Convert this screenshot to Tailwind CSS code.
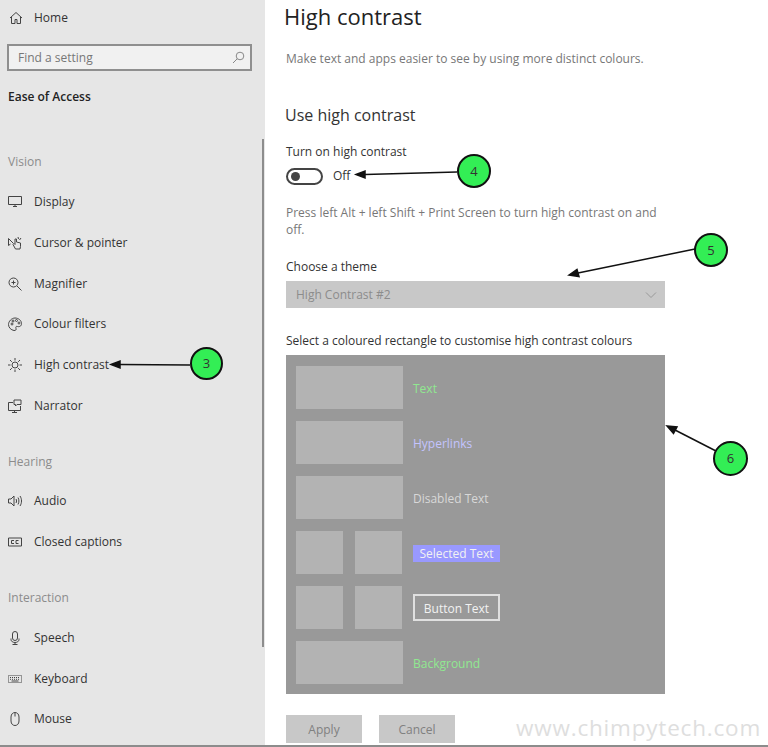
<!DOCTYPE html>
<html lang="en">
<head>
    <meta charset="UTF-8">
    <title>High contrast</title>
    <script src="https://cdn.jsdelivr.net/npm/@tailwindcss/browser@4"></script>
</head>
<body class="bg-white">
<div class="relative w-[768px] h-[747px] overflow-hidden flex font-['Open_Sans',sans-serif] text-[12px] text-[#333]">

    <!-- Sidebar -->
    <aside class="relative w-[265px] h-[745px] shrink-0 bg-[#e6e6e6]">
        <div class="h-[36px] flex items-center pl-[9px] gap-[11px]">
            <svg class="w-[14px] h-[14px]" viewBox="0 0 14 14" fill="none" stroke="#444" stroke-width="1"><path d="M1 7 7 1.500 13 7M2.500 6v6.500h3.500V8.500h2v4h3.500V6"/></svg>
            <span>Home</span>
        </div>
        <div class="mx-[7px] mt-[8px] h-[27px] w-[245px] border-2 border-[#8f8f8f] bg-[#f1f1f1] flex items-center justify-between pl-[9px] pr-[5px] text-[#777]">
            <span>Find a setting</span>
            <svg class="w-[13px] h-[13px]" viewBox="0 0 13 13" fill="none" stroke="#888" stroke-width="1"><circle cx="8" cy="5" r="3.800"/><path d="M5.200 7.800 1 12"/></svg>
        </div>
        <div class="mt-[16px] pl-[8px] font-semibold text-[#222] leading-[20px]">Ease of Access</div>

        <div class="mt-[45px] pl-[8px] h-[20px] leading-[20px] text-[#8c8c8c]">Vision</div>
        <div class="mt-[10px]">
            <div class="h-[40.700px] flex items-center pl-[8px] gap-[12px]">
                <svg class="w-[14px] h-[14px]" viewBox="0 0 14 14" fill="none" stroke="#444"><path d="M.5 1.500h13v8H.5zM5 11.500h4M7 9.500v2"/></svg>
                <span>Display</span>
            </div>
            <div class="h-[40.700px] flex items-center pl-[8px] gap-[12px]">
                <svg class="w-[14px] h-[14px]" viewBox="0 0 14 14" fill="none" stroke="#444"><path d="M.5 2.500v7l2-1.500M.5 2.500l5 5M7.500 13 5 8.500l1-1 1 1V3h1.500v3l4 1v3.500L12 13zM10 1l.5 2M13 2l-1.500 2"/></svg>
                <span>Cursor &amp; pointer</span>
            </div>
            <div class="h-[40.700px] flex items-center pl-[8px] gap-[12px]">
                <svg class="w-[14px] h-[14px]" viewBox="0 0 14 14" fill="none" stroke="#444"><circle cx="5.500" cy="5.500" r="4.500"/><path d="M3.500 5.500h4M5.500 3.500v4M9 9l4.500 4.500"/></svg>
                <span>Magnifier</span>
            </div>
            <div class="h-[40.700px] flex items-center pl-[8px] gap-[12px]">
                <svg class="w-[14px] h-[14px]" viewBox="0 0 14 14" fill="none" stroke="#444"><path d="M7 1c3.500 0 6.500 2.500 6.500 5.500S11 10 9.500 9.500 7.500 10 8 11.500 7.500 13.500 6 13.500C3 13 .5 10.500.5 7.500S3.500 1 7 1z"/><circle cx="4" cy="7" r="1"/><circle cx="5" cy="4" r="1"/><circle cx="8.500" cy="3.500" r="1"/><circle cx="11" cy="6" r="1"/></svg>
                <span>Colour filters</span>
            </div>
            <div class="h-[40.700px] flex items-center pl-[8px] gap-[12px]">
                <svg class="w-[14px] h-[14px]" viewBox="0 0 14 14" fill="none" stroke="#444"><circle cx="7" cy="7" r="3"/><path d="M7 0v2.500M7 11.500V14M0 7h2.500M11.500 7H14M2 2l1.800 1.800M10.200 10.200 12 12M12 2l-1.800 1.800M3.800 10.200 2 12"/></svg>
                <span>High contrast</span>
            </div>
            <div class="h-[40.700px] flex items-center pl-[8px] gap-[12px]">
                <svg class="w-[14px] h-[14px]" viewBox="0 0 14 14" fill="none" stroke="#444"><path d="M5 3.500H.5v8h12V7M4 13.500h5M6.500 11.500v2M6 1h7v4.500H9L7.500 7V5.500H6z"/></svg>
                <span>Narrator</span>
            </div>
        </div>

        <div class="mt-[26px] pl-[8px] h-[20px] leading-[20px] text-[#8c8c8c]">Hearing</div>
        <div class="mt-[9px]">
            <div class="h-[40.700px] flex items-center pl-[8px] gap-[12px]">
                <svg class="w-[14px] h-[14px]" viewBox="0 0 14 14" fill="none" stroke="#444"><path d="M.5 5v4h2.500L6 12V2L3 5zM8 5c.7 1.300.7 2.700 0 4M10 3.500c1.200 2.300 1.200 4.700 0 7M12 2c2 3 2 7 0 10"/></svg>
                <span>Audio</span>
            </div>
            <div class="h-[40.700px] flex items-center pl-[8px] gap-[12px]">
                <svg class="w-[14px] h-[14px]" viewBox="0 0 14 14" fill="none" stroke="#444"><path d="M.5 3h13v8H.5zM6 5.500H3.500v3H6M10.500 5.500H8v3h2.500"/></svg>
                <span>Closed captions</span>
            </div>
        </div>

        <div class="mt-[25px] pl-[8px] h-[20px] leading-[20px] text-[#8c8c8c]">Interaction</div>
        <div class="mt-[10px]">
            <div class="h-[40.700px] flex items-center pl-[8px] gap-[12px]">
                <svg class="w-[14px] h-[14px]" viewBox="0 0 14 14" fill="none" stroke="#444"><rect x="4.500" y=".5" width="5" height="9" rx="2.500"/><path d="M3 7.500v1c0 4 8 4 8 0v-1M7 12v2M4.500 13.500h5"/></svg>
                <span>Speech</span>
            </div>
            <div class="h-[40.700px] flex items-center pl-[8px] gap-[12px]">
                <svg class="w-[14px] h-[14px]" viewBox="0 0 14 14" fill="none" stroke="#444"><path d="M.5 3.500h13v7H.5zM2 5.500h10M2 7.300h10" stroke-dasharray="1 1"/><path d="M3.500 9h7"/></svg>
                <span>Keyboard</span>
            </div>
            <div class="h-[40.700px] flex items-center pl-[8px] gap-[12px]">
                <svg class="w-[14px] h-[14px]" viewBox="0 0 14 14" fill="none" stroke="#444"><path d="M3 5c0-6 8-6 8 0v4c0 6-8 6-8 0zM7 1v3.500"/></svg>
                <span>Mouse</span>
            </div>
        </div>

        <!-- scrollbar -->
        <div class="absolute left-[262px] top-[139px] w-[2px] h-[508px] bg-[#8d8d8d]"></div>
    </aside>

    <!-- Main content -->
    <main class="flex-1 pl-[21px] h-[745px]">
        <h1 class="h-[33px] leading-[33px] text-[22px] text-[#222] -ml-[2px]">High contrast</h1>
        <p class="mt-[16px] leading-[20px] text-[#777]">Make text and apps easier to see by using more distinct colours.</p>
        <h2 class="mt-[34px] leading-[24px] text-[16px] text-[#333] -ml-[1px]">Use high contrast</h2>
        <div class="mt-[16px] leading-[18px]">Turn on high contrast</div>
        <div class="mt-[5px] flex items-center gap-[10px] h-[20px]">
            <div class="w-[37px] h-[17px] rounded-full border-2 border-[#444] flex items-center pl-[3px]">
                <div class="w-[9px] h-[9px] rounded-full bg-[#444]"></div>
            </div>
            <span>Off</span>
        </div>
        <p class="mt-[18px] w-[380px] leading-[17px] text-[#777]">Press left Alt + left Shift + Print Screen to turn high contrast on and off.</p>
        <div class="mt-[20px] leading-[18px]">Choose a theme</div>
        <div class="mt-[5px] w-[379px] h-[27px] bg-[#c8c8c8] flex items-center justify-between pl-[10px] pr-[8px] text-[#8c8c8c]">
            <span>High Contrast #2</span>
            <svg class="w-[12px] h-[8px]" viewBox="0 0 12 8" fill="none" stroke="#999"><path d="M1 1.500 6 6.500 11 1.500"/></svg>
        </div>
        <div class="mt-[24px] leading-[18px]">Select a coloured rectangle to customise high contrast colours</div>

        <div class="mt-[5px] w-[379px] h-[339px] bg-[#999999] pt-[11px] pl-[10px] flex flex-col gap-[12px]">
            <div class="flex items-center gap-[10px] h-[43px]">
                <div class="w-[107px] h-full bg-[#b3b3b3]"></div>
                <span class="mt-[3px] text-[#90e890]">Text</span>
            </div>
            <div class="flex items-center gap-[10px] h-[43px]">
                <div class="w-[107px] h-full bg-[#b3b3b3]"></div>
                <span class="mt-[3px] text-[#c4c4ff]">Hyperlinks</span>
            </div>
            <div class="flex items-center gap-[10px] h-[43px]">
                <div class="w-[107px] h-full bg-[#b3b3b3]"></div>
                <span class="mt-[3px] text-[#d8d8d8]">Disabled Text</span>
            </div>
            <div class="flex items-center gap-[10px] h-[43px]">
                <div class="flex gap-[12px] w-[107px] h-full">
                    <div class="w-[47px] h-full bg-[#b3b3b3]"></div>
                    <div class="w-[47px] h-full bg-[#b3b3b3]"></div>
                </div>
                <span class="mt-[1px] w-[87px] h-[17px] leading-[17px] text-center bg-[#9999ff] text-[#f2f2f2]">Selected Text</span>
            </div>
            <div class="flex items-center gap-[10px] h-[43px]">
                <div class="flex gap-[12px] w-[107px] h-full">
                    <div class="w-[47px] h-full bg-[#b3b3b3]"></div>
                    <div class="w-[47px] h-full bg-[#b3b3b3]"></div>
                </div>
                <span class="w-[87px] h-[27px] leading-[25px] text-center border-2 border-[#e0e0e0] text-[#f2f2f2]">Button Text</span>
            </div>
            <div class="flex items-center gap-[10px] h-[43px]">
                <div class="w-[107px] h-full bg-[#b3b3b3]"></div>
                <span class="mt-[3px] text-[#90e890]">Background</span>
            </div>
        </div>

        <div class="mt-[21px] flex gap-[17px]">
            <div class="w-[76px] h-[28px] leading-[29px] text-center bg-[#c8c8c8] text-[#808080]">Apply</div>
            <div class="w-[76px] h-[28px] leading-[29px] text-center bg-[#c8c8c8] text-[#808080]">Cancel</div>
        </div>
    </main>

    <!-- watermark -->
    <div class="absolute left-[516px] top-[712px] text-[22.500px] leading-[32px] tracking-[0.800px] text-[#dedede]">www.chimpytech.com</div>

    <!-- bottom edge -->
    <div class="absolute left-0 top-[745px] w-full h-[2px] bg-[#8c8c8c]"></div>

    <!-- annotation arrows -->
    <svg class="absolute inset-0 w-[768px] h-[747px]" viewBox="0 0 768 747" fill="none" stroke="#111" stroke-width="1.500">
        <path d="M190 365 120 364.500"/>
        <path d="M111 364.500 120 361v7z" fill="#111"/>
        <path d="M457 172 365 174.500"/>
        <path d="M356 174.500 365 171v7z" fill="#111"/>
        <path d="M695 249 578 273"/>
        <path d="M569 275 577 269.500l2 7z" fill="#111"/>
        <path d="M716 451 675 430"/>
        <path d="M667 426 677 427l-3.500 6.500z" fill="#111"/>
    </svg>

    <!-- numbered markers -->
    <div class="absolute left-[190px] top-[347px] w-[33px] h-[33px] rounded-full border-2 border-[#111] bg-[#33ee55] text-[13px] text-center leading-[28px]">3</div>
    <div class="absolute left-[457px] top-[154px] w-[34px] h-[34px] rounded-full border-2 border-[#111] bg-[#33ee55] text-[13px] text-center leading-[30px]">4</div>
    <div class="absolute left-[694px] top-[233px] w-[34px] h-[34px] rounded-full border-2 border-[#111] bg-[#33ee55] text-[13px] text-center leading-[30px]">5</div>
    <div class="absolute left-[713px] top-[441px] w-[35px] h-[35px] rounded-full border-2 border-[#111] bg-[#33ee55] text-[13px] text-center leading-[31px]">6</div>
</div>
</body>
</html>
